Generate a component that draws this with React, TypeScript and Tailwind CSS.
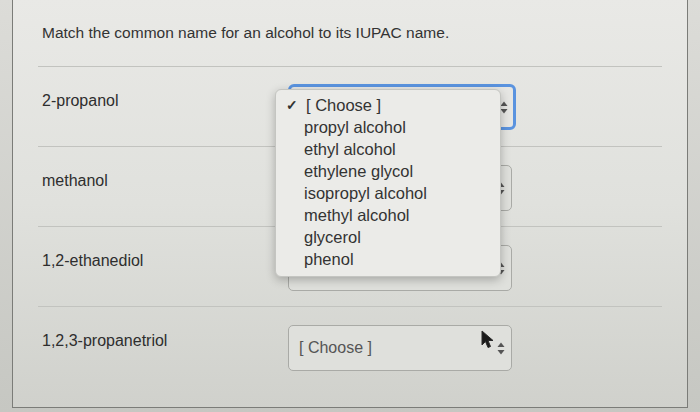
import React from "react";

const options = [
  "propyl alcohol",
  "ethyl alcohol",
  "ethylene glycol",
  "isopropyl alcohol",
  "methyl alcohol",
  "glycerol",
  "phenol",
];

const rows = ["2-propanol", "methanol", "1,2-ethanediol", "1,2,3-propanetriol"];

function Arrows() {
  return (
    <svg width="8" height="13" viewBox="0 0 8 13" className="shrink-0">
      <path d="M4 0.5 L7.5 5 L0.5 5 Z" fill="#555" />
      <path d="M4 12.5 L7.5 8 L0.5 8 Z" fill="#555" />
    </svg>
  );
}

function Cursor() {
  return (
    <svg width="14" height="20" viewBox="0 0 14 20">
      <path
        d="M1 1 L1 15 L4.5 11.5 L7 17.5 L9.5 16.5 L7 10.5 L12 10.5 Z"
        fill="#1a1a1a"
        stroke="#2a2a2a"
        strokeWidth="1"
        strokeLinejoin="round"
      />
    </svg>
  );
}

function Select({ focused, last }: { focused?: boolean; last?: boolean }) {
  return (
    <div
      className={
        focused
          ? "relative flex h-[46px] w-[228px] items-center justify-end rounded-[6px] border-[3px] border-[#5a93df] bg-[#e6e6e3] pr-[5px]"
          : "relative flex h-[46px] w-[224px] items-center justify-between rounded-[5px] border border-[#a9aaa6] bg-[#dfe0dc] pl-[10px] pr-[6px]"
      }
    >
      {last ? <span className="text-[16px] text-[#555]">[ Choose ]</span> : <span />}
      {last && (
        <div className="absolute left-[192px] top-[4px]">
          <Cursor />
        </div>
      )}
      <Arrows />
    </div>
  );
}

export default function App() {
  return (
    <div
      className="relative h-[412px] w-[700px] overflow-hidden bg-gradient-to-b from-[#dcdcd8] to-[#c6c7c2]"
      style={{ fontFamily: '"Liberation Sans", Arial, sans-serif' }}
    >
      <div className="ml-[12px] h-[408px] w-[676px] border-x border-b border-[#7b7c78] bg-gradient-to-b from-[#e9e9e6] via-[#e0e1dd] to-[#d0d1cc]">
        <div className="pl-[29px] pt-[21px] text-[15.5px] text-[#333]">
          Match the common name for an alcohol to its IUPAC name.
        </div>
        <div className="mx-[25px] mt-[22px] border-t border-[#c2c3bf]" />
        {rows.map((label, i) => (
          <div
            key={label}
            className={
              i < rows.length - 1
                ? "mx-[25px] flex h-[80px] border-b border-[#c2c3bf]"
                : "mx-[25px] flex h-[80px]"
            }
          >
            <div className="w-[250px] pl-[4px] pt-[22px] text-[16px] text-[#2e2e2e]">{label}</div>
            <div className={i === 0 ? "pt-[17px]" : "pt-[18px]"}>
              <Select focused={i === 0} last={i === rows.length - 1} />
            </div>
          </div>
        ))}
      </div>

      <div className="absolute left-[275px] top-[89px] w-[226px] rounded-[6px] border border-[#c4c5c1] bg-[#ebebe8] pb-[6px] pt-[4px] text-[16.5px] leading-[22px] text-[#333] shadow-[0_3px_10px_rgba(0,0,0,0.25)]">
        <div className="flex items-center pl-[10px]">
          <span className="w-[20px] text-[14px] font-bold">✓</span>
          <span>[ Choose ]</span>
        </div>
        {options.map((o) => (
          <div key={o} className="pl-[28px]">
            {o}
          </div>
        ))}
      </div>
    </div>
  );
}
